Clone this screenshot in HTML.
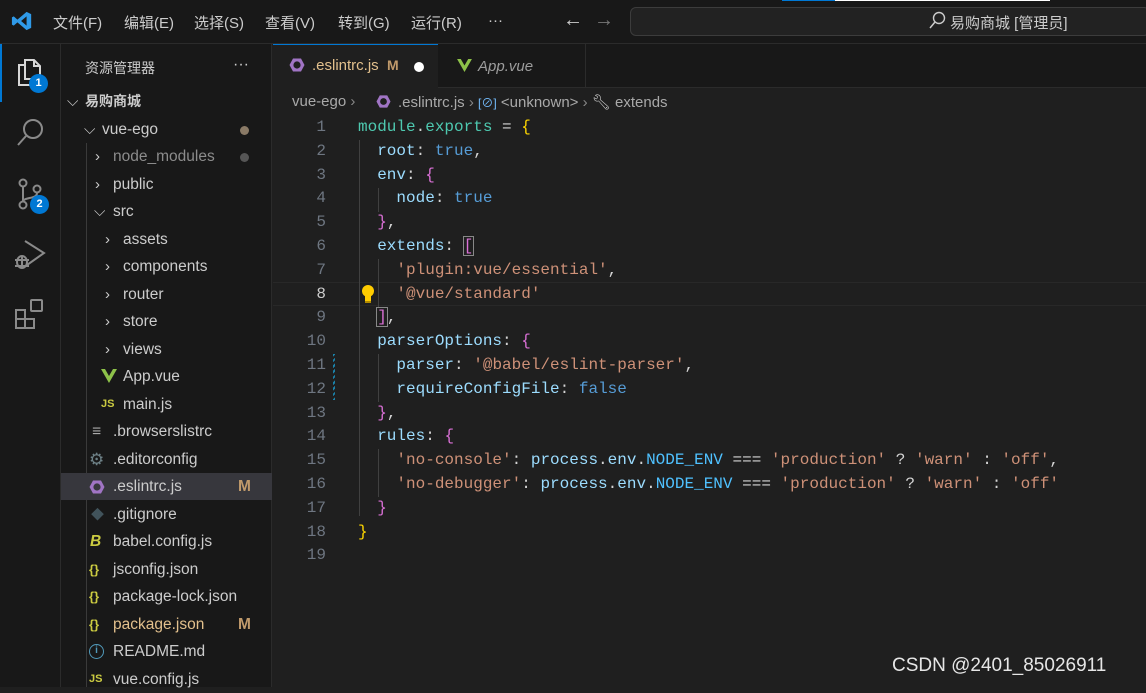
<!DOCTYPE html>
<html><head><meta charset="utf-8"><style>
*{margin:0;padding:0;box-sizing:border-box}
body{width:1146px;height:687px;background:#1f1f1f;overflow:hidden;position:relative;font-family:"Liberation Sans","Noto Sans CJK SC",sans-serif;color:#ccc}
.abs{position:absolute}
#title{left:0;top:0;width:1146px;height:44px;background:#181818;border-bottom:1px solid #2b2b2b}
.menu{top:12px;font-size:15px;color:#ccc}
#act{left:0;top:44px;width:61px;height:643px;background:#181818;border-right:1px solid #2b2b2b}
#side{left:61px;top:44px;width:211px;height:643px;background:#181818;border-right:1px solid #2b2b2b}
.row{position:absolute;left:0;width:211px;height:27px;font-size:15.5px;line-height:27px;color:#ccc;white-space:nowrap}
.chev{position:absolute;font-size:15px;color:#ccc}
#tabs{left:273px;top:44px;width:873px;height:44px;background:#181818;border-bottom:1px solid #2b2b2b}
.code{position:absolute;left:358px;font-family:"Liberation Mono",monospace;font-size:16px;white-space:pre;color:#9cdcfe;line-height:23.8px}
.ln{position:absolute;left:290px;width:36px;text-align:right;font-family:"Liberation Mono",monospace;font-size:16px;color:#6e7681;line-height:23.8px}
.s{color:#ce9178}.k{color:#569cd6}.p{color:#da70d6}.y{color:#ffd700}.w{color:#d4d4d4}.c{color:#4fc1ff}.t{color:#4ec9b0}
.guide{position:absolute;width:1px;background:#404040}
.badge{position:absolute;width:19px;height:19px;border-radius:50%;background:#0078d4;color:#fff;font-size:11px;font-weight:bold;text-align:center;line-height:19px}
</style></head><body>
<div id="title" class="abs">
 <svg class="abs" style="left:11px;top:10px" width="22" height="22" viewBox="0 0 24 24"><path d="M17 2 L22 4.5 V19.5 L17 22 L7 13.5 L3 17 L1 16 V8 L3 7 L7 10.5 Z M17 7 L11 12 L17 17 Z" fill="#2f9ae8" fill-rule="evenodd"/></svg>
 <span class="abs menu" style="left:53px">文件(F)</span>
 <span class="abs menu" style="left:124px">编辑(E)</span>
 <span class="abs menu" style="left:194px">选择(S)</span>
 <span class="abs menu" style="left:265px">查看(V)</span>
 <span class="abs menu" style="left:338px">转到(G)</span>
 <span class="abs menu" style="left:411px">运行(R)</span>
 <span class="abs menu" style="left:488px;top:12px">···</span>
 <span class="abs" style="left:563px;top:9px;font-size:20px;color:#ccc">←</span>
 <span class="abs" style="left:594px;top:9px;font-size:20px;color:#777">→</span>
 <div class="abs" style="left:630px;top:7px;width:520px;height:29px;border:1px solid #3c3c3c;border-radius:6px;background:#222"></div>
 <div class="abs" style="left:782px;top:0;width:53px;height:1px;background:#0078d4"></div>
 <div class="abs" style="left:835px;top:0;width:215px;height:1px;background:#fff"></div>
 <svg class="abs" style="left:928px;top:11px" width="18" height="20" viewBox="0 0 18 20"><circle cx="11" cy="7" r="5.5" stroke="#ccc" stroke-width="1.4" fill="none"/><path d="M7 11 L2 17" stroke="#ccc" stroke-width="1.5"/></svg>
 <span class="abs" style="left:950px;top:12px;font-size:15px;color:#ccc">易购商城 [管理员]</span>
</div>
<div id="act" class="abs">
 <div class="abs" style="left:0;top:0;width:2px;height:58px;background:#0078d4"></div>
 <svg class="abs" style="left:14px;top:12px" width="32" height="32" viewBox="0 0 32 32" fill="none" stroke="#d7d7d7" stroke-width="2"><path d="M11 4 H20 L26 10 V23 H11 Z M20 4 V10 H26"/><path d="M11 9 H5 V29 H19 V23"/></svg>
 <div class="badge" style="left:29px;top:30px">1</div>
 <svg class="abs" style="left:15px;top:72px" width="32" height="32" viewBox="0 0 32 32" fill="none" stroke="#8a8a8a" stroke-width="2"><circle cx="18" cy="13" r="9"/><path d="M11 20 L3 29"/></svg>
 <svg class="abs" style="left:15px;top:133px" width="32" height="34" viewBox="0 0 32 34" fill="none" stroke="#8a8a8a" stroke-width="2"><circle cx="8" cy="6" r="3.5"/><circle cx="8" cy="28" r="3.5"/><circle cx="22" cy="12" r="3.5"/><path d="M8 10 V24 M22 16 C22 22 10 20 8 24"/></svg>
 <div class="badge" style="left:30px;top:151px">2</div>
 <svg class="abs" style="left:13px;top:194px" width="34" height="34" viewBox="0 0 34 34" fill="none" stroke="#8a8a8a" stroke-width="2"><path d="M12 3 L31 15 L14 27"/><ellipse cx="9" cy="24" rx="5" ry="6"/><path d="M2 22 H16 M2 28 H16 M9 18 V30"/></svg>
 <svg class="abs" style="left:14px;top:254px" width="32" height="32" viewBox="0 0 32 32" fill="none" stroke="#8a8a8a" stroke-width="2"><rect x="2" y="12" width="9" height="9"/><rect x="11" y="21" width="9" height="9"/><rect x="2" y="21" width="9" height="9"/><rect x="17" y="2" width="11" height="11" rx="1"/></svg>
</div>
<div id="side" class="abs">
 <span class="abs" style="left:24px;top:14px;font-size:14px;color:#ccc">资源管理器</span>
 <span class="abs" style="left:172px;top:12px;font-size:16px;color:#ccc">···</span>
 <div class="abs" style="left:25px;top:99px;width:1px;height:544px;background:#3a3a3a"></div>
 <div class="row" style="top:44px"><span class="chev" style="left:6px">⌵</span><span style="position:absolute;left:24px;font-weight:bold;font-size:14px">易购商城</span></div>
 <div class="row" style="top:72px"><span class="chev" style="left:23px">⌵</span><span style="position:absolute;left:41px">vue-ego</span><span style="position:absolute;left:179px;top:10px;width:9px;height:9px;border-radius:50%;background:#8a7a66"></span></div>
 <div class="row" style="top:99px;color:#8c8c8c"><span class="chev" style="left:34px">›</span><span style="position:absolute;left:52px">node_modules</span><span style="position:absolute;left:179px;top:10px;width:9px;height:9px;border-radius:50%;background:#555"></span></div>
 <div class="row" style="top:127px"><span class="chev" style="left:34px">›</span><span style="position:absolute;left:52px">public</span></div>
 <div class="row" style="top:154px"><span class="chev" style="left:33px">⌵</span><span style="position:absolute;left:52px">src</span></div>
 <div class="row" style="top:182px"><span class="chev" style="left:44px">›</span><span style="position:absolute;left:62px">assets</span></div>
 <div class="row" style="top:209px"><span class="chev" style="left:44px">›</span><span style="position:absolute;left:62px">components</span></div>
 <div class="row" style="top:237px"><span class="chev" style="left:44px">›</span><span style="position:absolute;left:62px">router</span></div>
 <div class="row" style="top:264px"><span class="chev" style="left:44px">›</span><span style="position:absolute;left:62px">store</span></div>
 <div class="row" style="top:292px"><span class="chev" style="left:44px">›</span><span style="position:absolute;left:62px">views</span></div>
 <div class="row" style="top:319px"><svg style="position:absolute;left:40px;top:6px" width="16" height="14" viewBox="0 0 16 14"><path d="M0 0 H4 L8 7 L12 0 H16 L8 14 Z" fill="#8dc149"/></svg><span style="position:absolute;left:62px">App.vue</span></div>
 <div class="row" style="top:347px"><span style="position:absolute;left:40px;font-size:11px;font-weight:bold;color:#cbcb41">JS</span><span style="position:absolute;left:62px">main.js</span></div>
 <div class="row" style="top:374px"><span style="position:absolute;left:31px;color:#aaa">≡</span><span style="position:absolute;left:52px">.browserslistrc</span></div>
 <div class="row" style="top:402px"><span style="position:absolute;left:28px;color:#6d8086;font-size:17px">⚙</span><span style="position:absolute;left:52px">.editorconfig</span></div>
 <div class="row" style="top:429px;background:#37373d"><svg style="position:absolute;left:28px;top:6px" width="16" height="16" viewBox="0 0 16 16"><path d="M4 1.5 H12 L15.5 8 L12 14.5 H4 L0.5 8 Z" fill="#a074c4"/><circle cx="8" cy="8" r="3.6" fill="#37373d"/></svg><span style="position:absolute;left:52px">.eslintrc.js</span><span style="position:absolute;left:177px;font-weight:bold;color:#c09a6b">M</span></div>
 <div class="row" style="top:457px"><span style="position:absolute;left:30px;color:#41535b;font-size:13px">◆</span><span style="position:absolute;left:52px">.gitignore</span></div>
 <div class="row" style="top:484px"><span style="position:absolute;left:29px;color:#cbcb41;font-style:italic;font-weight:bold">B</span><span style="position:absolute;left:52px">babel.config.js</span></div>
 <div class="row" style="top:512px"><span style="position:absolute;left:28px;color:#cbcb41;font-size:13px;font-weight:bold">{}</span><span style="position:absolute;left:52px">jsconfig.json</span></div>
 <div class="row" style="top:539px"><span style="position:absolute;left:28px;color:#cbcb41;font-size:13px;font-weight:bold">{}</span><span style="position:absolute;left:52px">package-lock.json</span></div>
 <div class="row" style="top:567px;color:#e2c08d"><span style="position:absolute;left:28px;color:#cbcb41;font-size:13px;font-weight:bold">{}</span><span style="position:absolute;left:52px">package.json</span><span style="position:absolute;left:177px;font-weight:bold;color:#c09a6b">M</span></div>
 <div class="row" style="top:594px"><span style="position:absolute;left:28px;top:6px;width:15px;height:15px;border:1.5px solid #519aba;border-radius:50%;color:#519aba;font-size:10px;line-height:12px;text-align:center;font-weight:bold">i</span><span style="position:absolute;left:52px">README.md</span></div>
 <div class="row" style="top:622px"><span style="position:absolute;left:28px;font-size:11px;font-weight:bold;color:#cbcb41">JS</span><span style="position:absolute;left:52px">vue.config.js</span></div>
</div>
<div id="tabs" class="abs">
 <div class="abs" style="left:0;top:0;width:165px;height:44px;background:#1f1f1f;border-top:1px solid #0078d4"></div>
 <svg class="abs" style="left:16px;top:13px" width="16" height="16" viewBox="0 0 16 16"><path d="M4 1.5 H12 L15.5 8 L12 14.5 H4 L0.5 8 Z" fill="#a074c4"/><circle cx="8" cy="8" r="3.6" fill="#1f1f1f"/></svg>
 <span class="abs" style="left:39px;top:13px;font-size:15px;color:#e2c08d">.eslintrc.js</span>
 <span class="abs" style="left:114px;top:13px;font-size:14px;font-weight:bold;color:#c09a6b">M</span>
 <div class="abs" style="left:141px;top:18px;width:10px;height:10px;border-radius:50%;background:#fff"></div>
 <div class="abs" style="left:312px;top:0;width:1px;height:43px;background:#2b2b2b"></div>
 <svg class="abs" style="left:184px;top:15px" width="15" height="13" viewBox="0 0 16 14"><path d="M0 0 H4 L8 7 L12 0 H16 L8 14 Z" fill="#8dc149"/></svg>
 <span class="abs" style="left:205px;top:14px;font-size:15px;font-style:italic;color:#9d9d9d">App.vue</span>
</div>
<div class="abs" style="left:292px;top:93px;font-size:15px;color:#a9a9a9;white-space:nowrap">vue-ego <span style="color:#888">›</span></div>
<svg class="abs" style="left:376px;top:94px" width="15" height="15" viewBox="0 0 16 16"><path d="M4 1.5 H12 L15.5 8 L12 14.5 H4 L0.5 8 Z" fill="#a074c4"/><circle cx="8" cy="8" r="3.6" fill="#1f1f1f"/></svg>
<div class="abs" style="left:398px;top:93px;font-size:15px;color:#a9a9a9;white-space:nowrap">.eslintrc.js <span style="color:#888">›</span> <span style="color:#75beff;font-size:12px">[⊘]</span> &lt;unknown&gt; <span style="color:#888">›</span> <span style="color:#ccc">🔧︎</span> extends</div>

<div class="abs" style="left:273px;top:282px;width:873px;height:24px;border-top:1px solid #282828;border-bottom:1px solid #282828"></div>
<div class="guide" style="left:359px;top:140px;height:376px"></div>
<div class="guide" style="left:378px;top:188px;height:24px"></div>
<div class="guide" style="left:378px;top:259px;height:48px"></div>
<div class="guide" style="left:378px;top:354px;height:48px"></div>
<div class="guide" style="left:378px;top:449px;height:48px"></div>
<div class="abs" style="left:333px;top:354px;width:2px;height:46px;background:repeating-linear-gradient(135deg,#1b81a8 0 2px,transparent 2px 4px)"></div>
<svg class="abs" style="left:360px;top:284px" width="16" height="20" viewBox="0 0 16 20"><circle cx="8" cy="7" r="6" fill="#ffcc00"/><rect x="5" y="11" width="6" height="6" fill="#ffcc00"/><rect x="5" y="17" width="6" height="2" fill="#b08a00"/></svg>

<div class="ln" style="top:116px">1<br>2<br>3<br>4<br>5<br>6<br>7<br><span style="color:#ccc">8</span><br>9<br>10<br>11<br>12<br>13<br>14<br>15<br>16<br>17<br>18<br>19</div>
<div class="code" style="top:116px"><span class="t">module</span><span class="w">.</span><span class="t">exports</span> <span class="w">=</span> <span class="y">{</span>
  root<span class="w">:</span> <span class="k">true</span><span class="w">,</span>
  env<span class="w">:</span> <span class="p">{</span>
    node<span class="w">:</span> <span class="k">true</span>
  <span class="p">}</span><span class="w">,</span>
  extends<span class="w">:</span> <span class="p" style="outline:1px solid #888">[</span>
    <span class="s">'plugin:vue/essential'</span><span class="w">,</span>
    <span class="s">'@vue/standard'</span>
  <span class="p" style="outline:1px solid #888">]</span><span class="w">,</span>
  parserOptions<span class="w">:</span> <span class="p">{</span>
    parser<span class="w">:</span> <span class="s">'@babel/eslint-parser'</span><span class="w">,</span>
    requireConfigFile<span class="w">:</span> <span class="k">false</span>
  <span class="p">}</span><span class="w">,</span>
  rules<span class="w">:</span> <span class="p">{</span>
    <span class="s">'no-console'</span><span class="w">:</span> process<span class="w">.</span>env<span class="w">.</span><span class="c">NODE_ENV</span> <span class="w">===</span> <span class="s">'production'</span> <span class="w">?</span> <span class="s">'warn'</span> <span class="w">:</span> <span class="s">'off'</span><span class="w">,</span>
    <span class="s">'no-debugger'</span><span class="w">:</span> process<span class="w">.</span>env<span class="w">.</span><span class="c">NODE_ENV</span> <span class="w">===</span> <span class="s">'production'</span> <span class="w">?</span> <span class="s">'warn'</span> <span class="w">:</span> <span class="s">'off'</span>
  <span class="p">}</span>
<span class="y">}</span>
</div>
<div class="abs" style="left:892px;top:655px;font-size:19px;color:#e6e6e6">CSDN @2401_85026911</div>
</body></html>
